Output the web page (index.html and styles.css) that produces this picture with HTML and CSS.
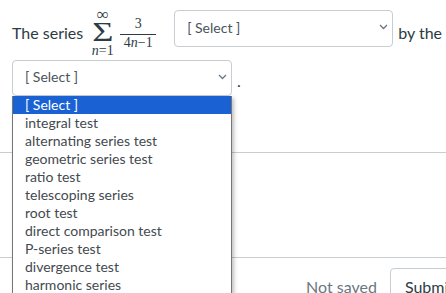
FILE: index.html
```html
<!DOCTYPE html>
<html lang="en">
<head>
    <meta charset="UTF-8">
    <meta name="viewport" content="width=device-width, initial-scale=1.0">
    <title>quiz question</title>
    <link rel="stylesheet" href="styles.css">
</head>
<body>
    <div class="question">
        <div class="prompt first">
            <span class="words">The series</span>
            <span class="sum">
                <span class="sum-top">∞</span>
                <span class="sum-sign">Σ</span>
                <span class="sum-bottom"><i>n</i>=1</span>
            </span>
            <span class="frac">
                <span class="frac-num">3</span>
                <span class="frac-den">4<i>n</i>−1</span>
            </span>
            <div class="pick pick-wide">
                <span>[ Select ]</span>
                <svg class="chev" width="9" height="6" viewBox="0 0 9 6"><path d="M1 1l3.5 3.5L8 1" fill="none" stroke="#6b7780" stroke-width="1.3"/></svg>
            </div>
            <span class="words after">by the</span>
        </div>
        <div class="prompt second">
            <div class="pick">
                <span>[ Select ]</span>
                <svg class="chev" width="9" height="6" viewBox="0 0 9 6"><path d="M1 1l3.5 3.5L8 1" fill="none" stroke="#6b7780" stroke-width="1.3"/></svg>
            </div>
            <span class="words dot">.</span>
        </div>

        <ul class="options">
            <li class="current">[ Select ]</li>
            <li>integral test</li>
            <li>alternating series test</li>
            <li>geometric series test</li>
            <li>ratio test</li>
            <li>telescoping series</li>
            <li>root test</li>
            <li>direct comparison test</li>
            <li>P-series test</li>
            <li>divergence test</li>
            <li>harmonic series</li>
        </ul>
    </div>

    <div class="answer"></div>

    <div class="footer">
        <span class="status">Not saved</span>
        <button class="submit">Submit Quiz</button>
    </div>
</body>
</html>
```

FILE: styles.css
```css
* {
    margin: 0;
    padding: 0;
    box-sizing: border-box;
}

html, body {
    height: 293px;
    overflow: hidden;
}

body {
    font-family: 'Lato', 'Noto Sans', sans-serif;
    color: #2d3b45;
    background: #fff;
}

.question {
    position: relative;
    height: 153px;
    border-bottom: 1px solid #c7cdd1;
    padding: 10px 0 0 12px;
}

.prompt {
    display: flex;
    align-items: flex-start;
    white-space: nowrap;
}

.first {
    height: 50px;
}

.words {
    font-size: 16px;
    line-height: 20px;
    margin-top: 13px;
}

.after {
    margin-left: 5px;
}

/* summation sign with limits */
.sum {
    display: flex;
    flex-direction: column;
    align-items: center;
    font-family: 'Liberation Serif', serif;
    margin: -1px 0 0 7px;
    width: 25px;
}

.sum-top {
    font-size: 17px;
    line-height: 12px;
}

.sum-sign {
    font-size: 27px;
    line-height: 22px;
    transform: scaleX(1.35);
}

.sum-bottom {
    font-size: 14px;
    line-height: 16px;
}

.frac {
    display: flex;
    flex-direction: column;
    align-items: center;
    width: 36px;
    font-family: 'Liberation Serif', serif;
    font-size: 14px;
    line-height: 14px;
    margin: 7px 0 0 5px;
}

.frac-num {
    padding-bottom: 3px;
}

.frac-den {
    align-self: stretch;
    text-align: center;
    border-top: 1px solid #2d3b45;
    padding-top: 1px;
}

.pick {
    display: flex;
    align-items: center;
    justify-content: space-between;
    width: 220px;
    height: 36px;
    padding: 0 4px 3px 12px;
    border: 1px solid #c7cdd1;
    border-radius: 4px;
    font-size: 14px;
    color: #4a545c;
    background: #fff;
}

.pick-wide {
    width: 219px;
    height: 37px;
    margin-left: 18px;
}

.dot {
    margin: 11px 0 0 5px;
}

.options {
    position: absolute;
    left: 12px;
    top: 96px;
    width: 220px;
    list-style: none;
    background: #fff;
    border: 1px solid #767676;
    border-top: none;
    box-shadow: 2px 2px 4px rgba(0, 0, 0, 0.25);
    font-size: 14px;
    z-index: 2;
}

.options li {
    height: 18px;
    line-height: 18px;
    padding-left: 12px;
    color: #444a4f;
}

.options .current {
    background: #1a62d3;
    color: #fff;
}

.answer {
    height: 105px;
    border-bottom: 1px solid #c7cdd1;
}

.footer {
    display: flex;
    align-items: flex-start;
    padding: 10px 0 0 306px;
    gap: 13px;
    white-space: nowrap;
}

.status {
    flex-shrink: 0;
    font-size: 16px;
    line-height: 20px;
    color: #6b7780;
    margin-top: 9px;
}

.submit {
    flex-shrink: 0;
    font-family: inherit;
    font-size: 16px;
    line-height: 20px;
    color: #2d3b45;
    background: #fff;
    border: 1px solid #c7cdd1;
    border-radius: 4px;
    padding: 8px 14px;
}
```
